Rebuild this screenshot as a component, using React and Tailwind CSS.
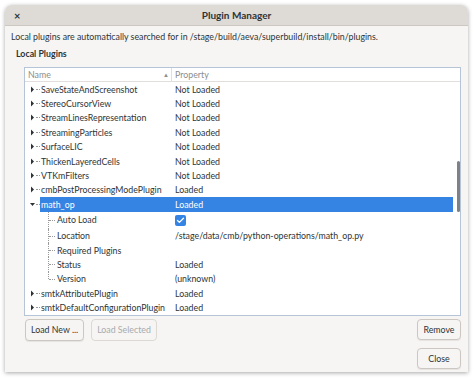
import { Check } from "lucide-react";

const before = [
  ["SaveStateAndScreenshot", "Not Loaded"],
  ["StereoCursorView", "Not Loaded"],
  ["StreamLinesRepresentation", "Not Loaded"],
  ["StreamingParticles", "Not Loaded"],
  ["SurfaceLIC", "Not Loaded"],
  ["ThickenLayeredCells", "Not Loaded"],
  ["VTKmFilters", "Not Loaded"],
  ["cmbPostProcessingModePlugin", "Loaded"],
];

const children = [
  ["Location", "/stage/data/cmb/python-operations/math_op.py"],
  ["Required Plugins", ""],
  ["Status", "Loaded"],
  ["Version", "(unknown)"],
];

const after = [
  ["smtkAttributePlugin", "Loaded"],
  ["smtkDefaultConfigurationPlugin", "Loaded"],
];

function Arrow({ open }) {
  return (
    <svg width="5" height="7" viewBox="0 0 5 7" className="shrink-0">
      {open ? (
        <path d="M0 2 L5 2 L2.5 5 Z" fill="#2e3436" />
      ) : (
        <path d="M1 0.5 L4 3.5 L1 6.5 Z" fill="#2e3436" />
      )}
    </svg>
  );
}

function RootRow({ name, value, open, selected }) {
  return (
    <div className="flex h-[14.4px] items-center">
      <div className="flex h-full w-[147px] shrink-0 items-center">
        <div className="flex w-[15px] shrink-0 items-center pl-[5px]">
          <Arrow open={open} />
          <span className="ml-[1px] w-[4px] border-t border-dotted border-[#9a9a9a]" />
        </div>
        <div
          className={
            "flex h-full flex-1 items-center pl-[1px] " +
            (selected ? "bg-[#3584e4] text-white" : "")
          }
        >
          {name}
        </div>
      </div>
      <div
        className={
          "mr-[7px] flex h-full flex-1 items-center pl-[3px] " +
          (selected ? "bg-[#3584e4] text-white" : "")
        }
      >
        {value}
      </div>
    </div>
  );
}

function ChildRow({ name, value, last, tall, children: extra }) {
  return (
    <div className={"flex items-center " + (tall ? "h-[17px]" : "h-[14.4px]")}>
      <div className="flex h-full w-[147px] shrink-0 items-center">
        <div className="relative h-full w-[32px] shrink-0">
          <span
            className={
              "absolute left-[23px] top-0 border-l border-dotted border-[#9a9a9a] " +
              (last ? "h-1/2" : "h-full")
            }
          />
          <span className="absolute left-[24px] top-1/2 w-[6px] border-t border-dotted border-[#9a9a9a]" />
        </div>
        <span>{name}</span>
      </div>
      <div className="flex h-full flex-1 items-center pl-[3px]">
        {extra || value}
      </div>
    </div>
  );
}

export default function App() {
  return (
    <div className="h-[378px] w-[474px] overflow-hidden bg-white pl-[5px] pt-[5px] font-['Lato','Noto_Sans',sans-serif] text-[8.8px] text-[#2e3436]">
      <div className="flex h-[367px] w-[463px] flex-col overflow-hidden rounded-t-[7px] bg-[#f6f5f4] shadow-[0_1px_4px_rgba(0,0,0,0.35)]">
        {/* title bar */}
        <div className="relative flex h-[21px] shrink-0 items-center justify-center border-b border-[#cdc7c2] bg-[#dedad6]">
          <span className="absolute left-[9px] top-[3px] text-[11px] font-bold">×</span>
          <span className="text-[10px] font-bold">Plugin Manager</span>
        </div>

        <div className="flex flex-1 flex-col">
          <p className="mt-[4px] pl-[6px] leading-[14px]">
            Local plugins are automatically searched for in /stage/build/aeva/superbuild/install/bin/plugins.
          </p>
          <p className="mt-[3px] pl-[11px] font-bold leading-[14px]">Local Plugins</p>

          {/* tree */}
          <div className="relative ml-[19px] mt-[6px] h-[249px] w-[437px] border border-[#b5c4d6] bg-white">
            <div className="flex h-[14px] items-center border-b border-[#e1dedb] text-[#8b8e8f]">
              <div className="flex h-full w-[147px] shrink-0 items-center justify-between border-r border-[#e1dedb] pl-[3px] pr-[2px]">
                <span>Name</span>
                <span className="text-[6px]">▲</span>
              </div>
              <span className="pl-[3px]">Property</span>
            </div>

            {before.map(([n, v]) => (
              <RootRow key={n} name={n} value={v} />
            ))}
            <RootRow name="math_op" value="Loaded" open selected />
            <ChildRow name="Auto Load" tall>
              <span className="flex h-[11px] w-[11px] items-center justify-center rounded-[2px] bg-[#3584e4]">
                <Check size={9} strokeWidth={3.5} color="white" />
              </span>
            </ChildRow>
            {children.map(([n, v], i) => (
              <ChildRow key={n} name={n} value={v} last={i === children.length - 1} />
            ))}
            {after.map(([n, v]) => (
              <RootRow key={n} name={n} value={v} />
            ))}

            <span className="absolute right-[0px] top-[93px] h-[51px] w-[3px] rounded-full bg-[#7e8185]" />
          </div>

          {/* buttons */}
          <div className="mt-[3px] flex items-start justify-between pl-[20px] pr-[7px]">
            <div className="flex gap-[7px]">
              <button className="h-[22px] rounded-[4px] border border-[#cdc7c2] bg-[#f6f5f4] px-[5px] shadow-[0_1px_1px_rgba(0,0,0,0.07)]">
                Load New ...
              </button>
              <button className="h-[22px] rounded-[4px] border border-[#dcd8d4] bg-[#f6f5f4] px-[5px] text-[#a7abac]">
                Load Selected
              </button>
            </div>
            <div className="flex flex-col gap-[8px]">
              <button className="h-[21px] w-[44px] rounded-[4px] border border-[#cdc7c2] bg-[#f6f5f4] shadow-[0_1px_1px_rgba(0,0,0,0.07)]">
                Remove
              </button>
              <button className="h-[21px] w-[44px] rounded-[4px] border border-[#cdc7c2] bg-[#f6f5f4] shadow-[0_1px_1px_rgba(0,0,0,0.07)]">
                Close
              </button>
            </div>
          </div>
        </div>
      </div>
    </div>
  );
}
